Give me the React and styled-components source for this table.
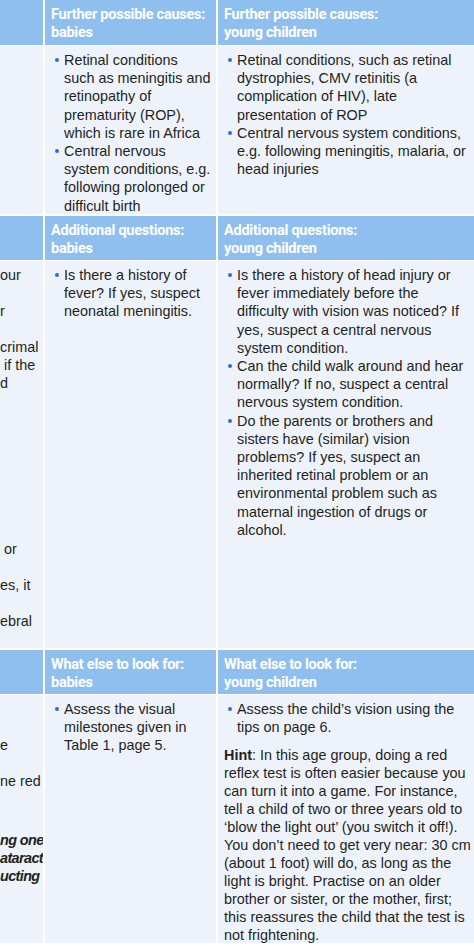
import styled, { createGlobalStyle } from "styled-components";

const GlobalStyle = createGlobalStyle`
    html, body {
        margin: 0;
        padding: 0;
        background: #ffffff;
    }
`

const Table = styled.div`
    width: 474px;
    height: 946px;
    display: grid;
    grid-template-columns: 43px 171px 1fr;
    grid-template-rows: 45px 168px 45px 387px 45px 248px;
    column-gap: 2px;
    row-gap: 1px;
    background: #ffffff;
    font-family: "Liberation Sans", Arial, sans-serif;
    color: #231f20;
    overflow: hidden;
`

const HeadCell = styled.div`
    background: #8fbfee;
    color: #ffffff;
    font-family: Roboto, "Liberation Sans", sans-serif;
    font-weight: 700;
    font-size: 14.5px;
    letter-spacing: -0.25px;
    line-height: 18px;
    padding: 6px 4px 0 6px;
    white-space: nowrap;
    margin-top: ${props => props.$gap ? "1px" : "0"};
`

const BodyCell = styled.div`
    background: #eef3fb;
    font-size: 14.4px;
    line-height: 18.2px;
    padding: 5px 4px 0 7px;
    overflow: hidden;
`

const CutCell = styled(BodyCell)`
    padding: 5px 0 0 0;
    white-space: pre;
`

const CutLines = styled.div`
    margin-top: ${props => props.$mt || "0"};
    font-style: ${props => props.$em ? "italic" : "normal"};
    font-weight: ${props => props.$em ? 700 : 400};
    letter-spacing: ${props => props.$em ? "-0.6px" : "0"};
    line-height: 18px;
`

const List = styled.ul`
    list-style: none;
    margin: 0;
    padding: 0 0 0 12px;
`

const Item = styled.li`
    position: relative;
    white-space: nowrap;

    &::before {
        content: "";
        position: absolute;
        left: -9px;
        top: 7px;
        width: 4px;
        height: 4px;
        border-radius: 50%;
        background: #2b6fd6;
    }
`

const Hint = styled.p`
    margin: 10px 0 0 -1px;
    line-height: 18px;
    white-space: nowrap;

    b {
        font-weight: 700;
    }
`

const Lines = ({ lines }) => lines.map((l, i) => (
    <span key={i}>{l}{i < lines.length - 1 && <br />}</span>
))

const rows = [
    {
        head: "Further possible causes:",
        babies: [
            ["Retinal conditions", "such as meningitis and", "retinopathy of", "prematurity (ROP),", "which is rare in Africa"],
            ["Central nervous", "system conditions, e.g.", "following prolonged or", "difficult birth"],
        ],
        children: [
            ["Retinal conditions, such as retinal", "dystrophies, CMV retinitis (a", "complication of HIV), late", "presentation of ROP"],
            ["Central nervous system conditions,", "e.g. following meningitis, malaria, or", "head injuries"],
        ],
    },
    {
        head: "Additional questions:",
        babies: [
            ["Is there a history of", "fever? If yes, suspect", "neonatal meningitis."],
        ],
        children: [
            ["Is there a history of head injury or", "fever immediately before the", "difficulty with vision was noticed? If", "yes, suspect a central nervous", "system condition."],
            ["Can the child walk around and hear", "normally? If no, suspect a central", "nervous system condition."],
            ["Do the parents or brothers and", "sisters have (similar) vision", "problems? If yes, suspect an", "inherited retinal problem or an", "environmental problem such as", "maternal ingestion of drugs or", "alcohol."],
        ],
    },
    {
        head: "What else to look for:",
        babies: [
            ["Assess the visual", "milestones given in", "Table 1, page 5."],
        ],
        children: [
            ["Assess the child\u2019s vision using the", "tips on page 6."],
        ],
    },
]

const hintLines = [
    "reflex test is often easier because you",
    "can turn it into a game. For instance,",
    "tell a child of two or three years old to",
    "\u2018blow the light out\u2019 (you switch it off!).",
    "You don\u2019t need to get very near: 30 cm",
    "(about 1 foot) will do, as long as the",
    "light is bright. Practise on an older",
    "brother or sister, or the mother, first;",
    "this reassures the child that the test is",
    "not frightening.",
]

const firstColumn = [
    null,
    (
        <>
            <CutLines>{"our\n\nr\n\ncrimal\n if the\nd"}</CutLines>
            <CutLines $mt="148px">{" or\n\nes, it\n\nebral"}</CutLines>
        </>
    ),
    (
        <>
            <CutLines>{"\n\ne\n\nne red"}</CutLines>
            <CutLines $mt="41px" $em>{"ng one\nataract\nucting"}</CutLines>
        </>
    ),
]

export default function App() {
    return (
        <>
            <GlobalStyle />
            <Table>
                {rows.map((row, r) => [
                    <HeadCell key={`h0-${r}`} $gap={r > 0} />,
                    <HeadCell key={`h1-${r}`} $gap={r > 0}>{row.head}<br />babies</HeadCell>,
                    <HeadCell key={`h2-${r}`} $gap={r > 0}>{row.head}<br />young children</HeadCell>,
                    <CutCell key={`b0-${r}`}>{firstColumn[r]}</CutCell>,
                    <BodyCell key={`b1-${r}`}>
                        <List>
                            {row.babies.map((item, i) => (
                                <Item key={i}><Lines lines={item} /></Item>
                            ))}
                        </List>
                    </BodyCell>,
                    <BodyCell key={`b2-${r}`}>
                        <List>
                            {row.children.map((item, i) => (
                                <Item key={i}><Lines lines={item} /></Item>
                            ))}
                        </List>
                        {r === 2 && (
                            <Hint>
                                <b>Hint</b>: In this age group, doing a red<br />
                                <Lines lines={hintLines} />
                            </Hint>
                        )}
                    </BodyCell>,
                ])}
            </Table>
        </>
    )
}
